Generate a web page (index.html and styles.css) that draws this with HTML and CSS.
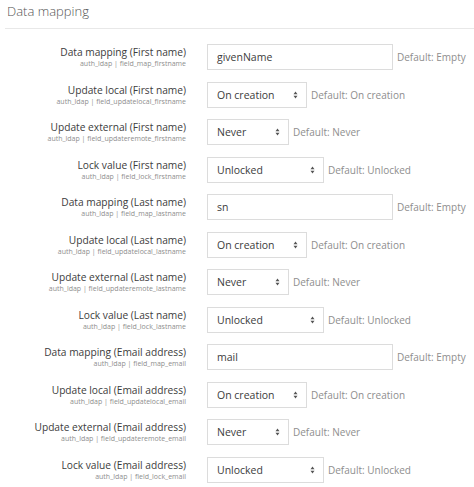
FILE: index.html
```html
<!DOCTYPE html>
<html>
<head>
<meta charset="utf-8">
<link rel="stylesheet" href="styles.css">
</head>
<body>
<div class="page">
  <h2 class="title">Data mapping</h2>
  <div class="form">
    <div class="row">
      <div class="label"><div class="name">Data mapping (First name)</div><div class="key">auth_ldap | field_map_firstname</div></div>
      <div class="ctrl"><div class="input">givenName</div><span class="def">Default: Empty</span></div>
    </div>
    <div class="row">
      <div class="label"><div class="name">Update local (First name)</div><div class="key">auth_ldap | field_updatelocal_firstname</div></div>
      <div class="ctrl"><div class="select w-oc"><span>On creation</span><svg class="arr" width="5" height="8" viewBox="0 0 5 8"><path d="M0.5 3.2 L2.5 0.6 L4.5 3.2 Z M0.5 4.8 L2.5 7.4 L4.5 4.8 Z" fill="#555"/></svg></div><span class="def">Default: On creation</span></div>
    </div>
    <div class="row">
      <div class="label"><div class="name">Update external (First name)</div><div class="key">auth_ldap | field_updateremote_firstname</div></div>
      <div class="ctrl"><div class="select w-nv"><span>Never</span><svg class="arr" width="5" height="8" viewBox="0 0 5 8"><path d="M0.5 3.2 L2.5 0.6 L4.5 3.2 Z M0.5 4.8 L2.5 7.4 L4.5 4.8 Z" fill="#555"/></svg></div><span class="def">Default: Never</span></div>
    </div>
    <div class="row">
      <div class="label"><div class="name">Lock value (First name)</div><div class="key">auth_ldap | field_lock_firstname</div></div>
      <div class="ctrl"><div class="select w-ul"><span>Unlocked</span><svg class="arr" width="5" height="8" viewBox="0 0 5 8"><path d="M0.5 3.2 L2.5 0.6 L4.5 3.2 Z M0.5 4.8 L2.5 7.4 L4.5 4.8 Z" fill="#555"/></svg></div><span class="def">Default: Unlocked</span></div>
    </div>
    <div class="row">
      <div class="label"><div class="name">Data mapping (Last name)</div><div class="key">auth_ldap | field_map_lastname</div></div>
      <div class="ctrl"><div class="input">sn</div><span class="def">Default: Empty</span></div>
    </div>
    <div class="row">
      <div class="label"><div class="name">Update local (Last name)</div><div class="key">auth_ldap | field_updatelocal_lastname</div></div>
      <div class="ctrl"><div class="select w-oc"><span>On creation</span><svg class="arr" width="5" height="8" viewBox="0 0 5 8"><path d="M0.5 3.2 L2.5 0.6 L4.5 3.2 Z M0.5 4.8 L2.5 7.4 L4.5 4.8 Z" fill="#555"/></svg></div><span class="def">Default: On creation</span></div>
    </div>
    <div class="row">
      <div class="label"><div class="name">Update external (Last name)</div><div class="key">auth_ldap | field_updateremote_lastname</div></div>
      <div class="ctrl"><div class="select w-nv"><span>Never</span><svg class="arr" width="5" height="8" viewBox="0 0 5 8"><path d="M0.5 3.2 L2.5 0.6 L4.5 3.2 Z M0.5 4.8 L2.5 7.4 L4.5 4.8 Z" fill="#555"/></svg></div><span class="def">Default: Never</span></div>
    </div>
    <div class="row">
      <div class="label"><div class="name">Lock value (Last name)</div><div class="key">auth_ldap | field_lock_lastname</div></div>
      <div class="ctrl"><div class="select w-ul"><span>Unlocked</span><svg class="arr" width="5" height="8" viewBox="0 0 5 8"><path d="M0.5 3.2 L2.5 0.6 L4.5 3.2 Z M0.5 4.8 L2.5 7.4 L4.5 4.8 Z" fill="#555"/></svg></div><span class="def">Default: Unlocked</span></div>
    </div>
    <div class="row">
      <div class="label"><div class="name">Data mapping (Email address)</div><div class="key">auth_ldap | field_map_email</div></div>
      <div class="ctrl"><div class="input">mail</div><span class="def">Default: Empty</span></div>
    </div>
    <div class="row">
      <div class="label"><div class="name">Update local (Email address)</div><div class="key">auth_ldap | field_updatelocal_email</div></div>
      <div class="ctrl"><div class="select w-oc"><span>On creation</span><svg class="arr" width="5" height="8" viewBox="0 0 5 8"><path d="M0.5 3.2 L2.5 0.6 L4.5 3.2 Z M0.5 4.8 L2.5 7.4 L4.5 4.8 Z" fill="#555"/></svg></div><span class="def">Default: On creation</span></div>
    </div>
    <div class="row">
      <div class="label"><div class="name">Update external (Email address)</div><div class="key">auth_ldap | field_updateremote_email</div></div>
      <div class="ctrl"><div class="select w-nv"><span>Never</span><svg class="arr" width="5" height="8" viewBox="0 0 5 8"><path d="M0.5 3.2 L2.5 0.6 L4.5 3.2 Z M0.5 4.8 L2.5 7.4 L4.5 4.8 Z" fill="#555"/></svg></div><span class="def">Default: Never</span></div>
    </div>
    <div class="row">
      <div class="label"><div class="name">Lock value (Email address)</div><div class="key">auth_ldap | field_lock_email</div></div>
      <div class="ctrl"><div class="select w-ul"><span>Unlocked</span><svg class="arr" width="5" height="8" viewBox="0 0 5 8"><path d="M0.5 3.2 L2.5 0.6 L4.5 3.2 Z M0.5 4.8 L2.5 7.4 L4.5 4.8 Z" fill="#555"/></svg></div><span class="def">Default: Unlocked</span></div>
    </div>
  </div>
</div>
</body>
</html>
```

FILE: styles.css
```css
html, body {
  margin: 0;
  padding: 0;
  background: #fff;
}
body {
  font-family: "Open Sans", "Noto Sans", sans-serif;
  color: #333;
  overflow: hidden;
}
.page {
  width: 474px;
  height: 487px;
  box-sizing: border-box;
  padding-left: 5px;
}
.title {
  margin: 0;
  padding: 0 0 0 2px;
  height: 29px;
  line-height: 22px;
  box-sizing: border-box;
  font-size: 13px;
  font-weight: 300;
  color: #555;
  border-bottom: 1px solid #e8e8e8;
}
.form {
  padding-top: 15px;
  display: grid;
  grid-auto-rows: 37.5px;
}
.row {
  display: grid;
  grid-template-columns: 181px 1fr;
  column-gap: 21px;
  align-items: start;
}
.label {
  text-align: right;
  padding-top: 2px;
}
.name {
  font-size: 10.2px;
  line-height: 13px;
  color: #3c3c3c;
  white-space: nowrap;
}
.key {
  font-size: 7px;
  line-height: 9px;
  color: #8e8e8e;
  white-space: nowrap;
}
.ctrl {
  display: flex;
  align-items: center;
  gap: 4px;
  height: 26px;
}
.input, .select {
  box-sizing: border-box;
  height: 26px;
  border: 1px solid #dcdcdc;
  background: #fff;
  font-size: 10.5px;
  color: #3c3c3c;
  display: flex;
  align-items: center;
  padding-left: 9px;
}
.input {
  width: 186px;
}
.select {
  justify-content: space-between;
  padding-right: 8px;
}
.w-oc { width: 100px; }
.w-nv { width: 82px; }
.w-ul { width: 117px; }
.arr {
  display: block;
}
.def {
  font-size: 10px;
  color: #8e8e8e;
  white-space: nowrap;
}
```
